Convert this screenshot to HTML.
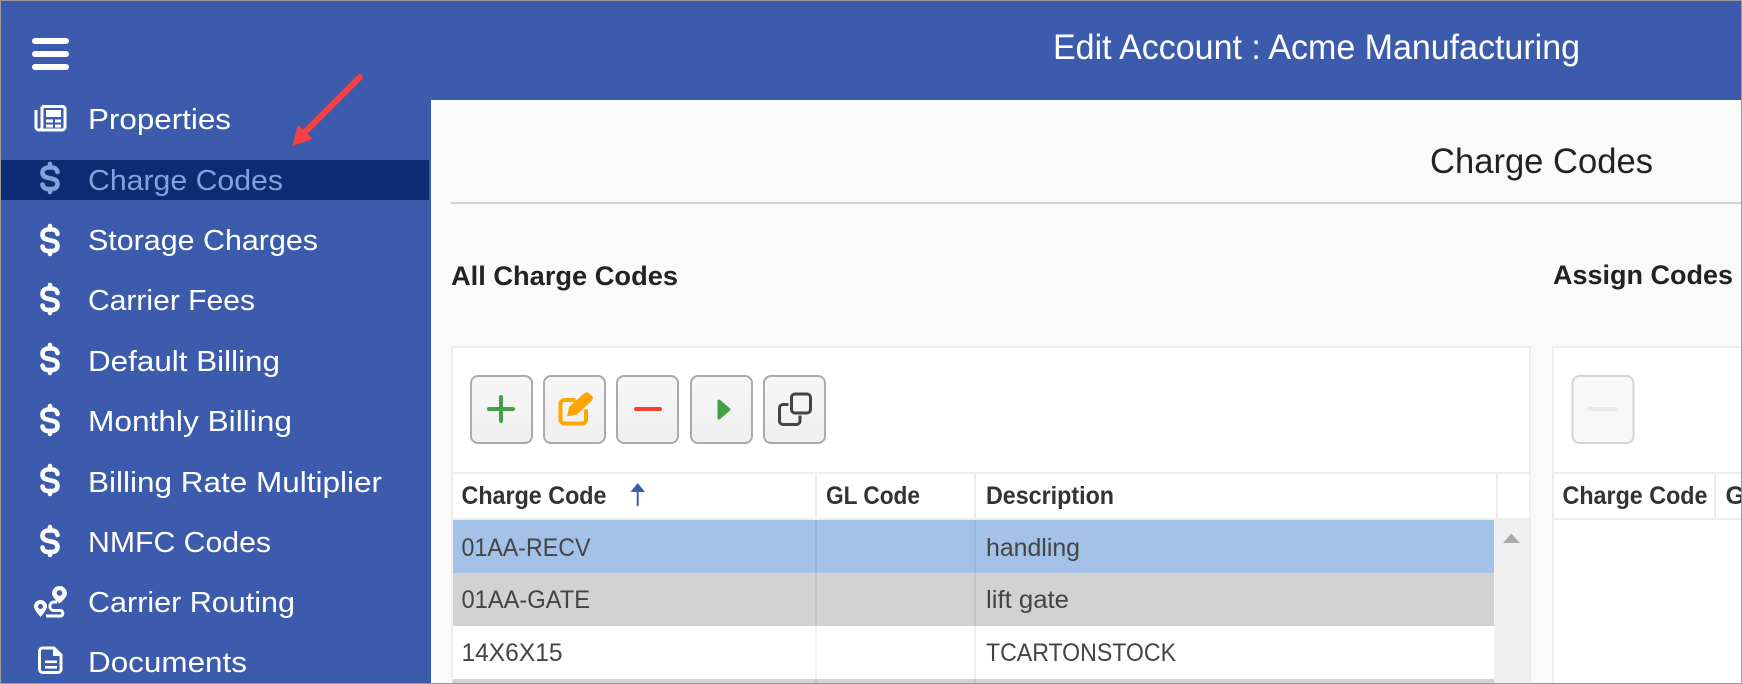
<!DOCTYPE html>
<html>
<head>
<meta charset="utf-8">
<title>Edit Account : Acme Manufacturing</title>
<style>
html,body{margin:0;padding:0;width:1742px;height:684px;overflow:hidden;background:#fafafa}
svg{display:block;position:absolute;left:0;top:0}
text{font-family:"Liberation Sans",Arial,sans-serif}
.nav{font-size:29px;fill:#fff}
.hd{font-size:25px;font-weight:bold;fill:#333}
.td{font-size:25px;fill:#444}
.btn{stroke:#aaa;stroke-width:2;fill:url(#g)}
</style>
</head>
<body>
<svg width="1742" height="684" viewBox="0 0 1742 684">
<defs>
<linearGradient id="g" x1="0" y1="0" x2="0" y2="1"><stop offset="0" stop-color="#f7f7f7"/><stop offset="1" stop-color="#efefef"/></linearGradient>
<g id="d" fill="none" stroke-linecap="round" stroke-linejoin="round">
<path stroke-width="4.600" d="M10 2V5M10 27V30"/>
<path stroke-width="4.600" d="M17.500 10C17 7 14.500 5.500 12 5.500H8.500C5 5.500 2.500 7.500 2.500 10.500C2.500 13.500 4.500 15 7 15.500L13 17C16 17.700 17.500 19.500 17.500 22C17.500 25 15.500 27 12 27H8C5 27 3 25.500 2.500 22.500"/>
</g>
</defs>

<!-- backgrounds -->
<rect x="0" y="0" width="1742" height="684" fill="#fafafa"/>
<rect x="0" y="0" width="1742" height="100" fill="#3c5bac"/>
<rect x="0" y="0" width="431" height="684" fill="#3c5bac"/>
<rect x="1" y="160" width="428" height="40" fill="#0d2b73"/>

<!-- header -->
<g fill="#fff"><rect x="32" y="38" width="37" height="6" rx="3"/><rect x="32" y="51" width="37" height="6" rx="3"/><rect x="32" y="64" width="37" height="6" rx="3"/></g>
<text x="1053" y="59" font-size="35" fill="#fff" textLength="527" lengthAdjust="spacingAndGlyphs">Edit Account : Acme Manufacturing</text>

<!-- red arrow -->
<path d="M360 77L304 133" stroke="#f44141" stroke-width="6" stroke-linecap="round" fill="none"/>
<path d="M292 146L298 125L313 139Z" fill="#f44141"/>

<!-- nav icons -->
<g fill="none" stroke="#fff" stroke-width="3" stroke-linejoin="round">
<path d="M42 106.500H62.500A2.500 2.500 0 0 1 65 109V127A3 3 0 0 1 62 130H38.500A3 3 0 0 1 36 127V110"/>
<path d="M42 106.500V127A3 3 0 0 1 39 130"/>
</g>
<g fill="#fff"><rect x="46" y="110" width="15" height="7"/><rect x="46" y="119.500" width="7" height="3"/><rect x="55" y="119.500" width="6" height="3"/><rect x="46" y="124.500" width="7" height="3"/><rect x="55" y="124.500" width="6" height="3"/></g>
<use href="#d" x="40" y="162" stroke="#7ea3dc"/>
<use href="#d" x="40" y="224" stroke="#fff"/>
<use href="#d" x="40" y="283" stroke="#fff"/>
<use href="#d" x="40" y="343" stroke="#fff"/>
<use href="#d" x="40" y="404" stroke="#fff"/>
<use href="#d" x="40" y="464" stroke="#fff"/>
<use href="#d" x="40" y="525" stroke="#fff"/>
<!-- route -->
<path d="M59.500 586a7.500 7.500 0 0 0-7.500 7.500c0 4 7.500 10 7.500 10s7.500-6 7.500-10a7.500 7.500 0 0 0-7.500-7.500z" fill="#fff"/>
<circle cx="59.500" cy="593" r="2.800" fill="#3c5bac"/>
<path d="M40.500 600a6.500 6.500 0 0 0-6.500 6.500c0 3.500 6.500 10.500 6.500 10.500s6.500-7 6.500-10.500a6.500 6.500 0 0 0-6.500-6.500z" fill="#fff"/>
<circle cx="40.500" cy="606.500" r="2.500" fill="#3c5bac"/>
<path d="M57 602H53.500A4.300 4.300 0 0 0 53.500 610.500H61A3 3 0 0 1 61 616H46" fill="none" stroke="#fff" stroke-width="3"/>
<!-- document -->
<path d="M42.500 648H54L61 655V669.500A3 3 0 0 1 58 672.500H42.500A3 3 0 0 1 39.500 669.500V651A3 3 0 0 1 42.500 648Z" fill="none" stroke="#fff" stroke-width="3" stroke-linejoin="round"/>
<path d="M54 648V655H61" fill="#fff" stroke="#fff" stroke-width="2"/>
<rect x="45" y="660.500" width="12" height="2.600" fill="#fff"/><rect x="45" y="666" width="12" height="2.600" fill="#fff"/>

<!-- nav text -->
<g class="nav">
<text class="nav" x="88" y="129" textLength="143" lengthAdjust="spacingAndGlyphs">Properties</text>
<text class="nav" x="88" y="190" textLength="195" lengthAdjust="spacingAndGlyphs" style="fill:#7ea3dc">Charge Codes</text>
<text class="nav" x="88" y="250" textLength="230" lengthAdjust="spacingAndGlyphs">Storage Charges</text>
<text class="nav" x="88" y="310" textLength="167" lengthAdjust="spacingAndGlyphs">Carrier Fees</text>
<text class="nav" x="88" y="371" textLength="192" lengthAdjust="spacingAndGlyphs">Default Billing</text>
<text class="nav" x="88" y="431" textLength="204" lengthAdjust="spacingAndGlyphs">Monthly Billing</text>
<text class="nav" x="88" y="492" textLength="294" lengthAdjust="spacingAndGlyphs">Billing Rate Multiplier</text>
<text class="nav" x="88" y="552" textLength="183" lengthAdjust="spacingAndGlyphs">NMFC Codes</text>
<text class="nav" x="88" y="612" textLength="207" lengthAdjust="spacingAndGlyphs">Carrier Routing</text>
<text class="nav" x="88" y="672" textLength="159" lengthAdjust="spacingAndGlyphs">Documents</text>
</g>

<!-- page title -->
<text x="1430" y="173" font-size="35" fill="#222" textLength="223" lengthAdjust="spacingAndGlyphs">Charge Codes</text>
<rect x="451" y="202" width="1290" height="2" fill="#d2d2d2"/>
<text x="451" y="285" font-size="27" font-weight="bold" fill="#222" textLength="227" lengthAdjust="spacingAndGlyphs">All Charge Codes</text>
<text x="1553" y="284" font-size="27" font-weight="bold" fill="#222" textLength="180" lengthAdjust="spacingAndGlyphs">Assign Codes</text>

<!-- left panel -->
<rect x="452" y="347" width="1078" height="338" fill="#fff" stroke="#eee" stroke-width="2"/>
<rect x="453" y="472" width="1076" height="2" fill="#eee"/>
<rect x="453" y="518" width="1076" height="2" fill="#eee"/>
<rect x="453" y="520" width="1041" height="53" fill="#a4c2e8"/>
<rect x="453" y="573" width="1041" height="53" fill="#d2d2d2"/>
<rect x="453" y="679" width="1041" height="5" fill="#d2d2d2"/>
<rect x="1494" y="520" width="35" height="164" fill="#f0f0f0"/>
<path d="M1511.300 533.500L1520 543H1503Z" fill="#a9a9a9"/>
<rect x="815" y="474" width="2" height="44" fill="#eee"/>
<rect x="974" y="474" width="2" height="44" fill="#eee"/>
<rect x="1496" y="474" width="2" height="44" fill="#eee"/>
<rect x="815" y="520" width="2" height="164" fill="#000" fill-opacity=".06"/>
<rect x="974" y="520" width="2" height="164" fill="#000" fill-opacity=".06"/>

<!-- buttons -->
<rect class="btn" x="471" y="376" width="61" height="67" rx="7"/>
<rect class="btn" x="544" y="376" width="61" height="67" rx="7"/>
<rect class="btn" x="617" y="376" width="61" height="67" rx="7"/>
<rect class="btn" x="691" y="376" width="61" height="67" rx="7"/>
<rect class="btn" x="764" y="376" width="61" height="67" rx="7"/>
<path d="M489 409H513M501 397V421" stroke="#43a047" stroke-width="4" stroke-linecap="round" fill="none"/>
<path d="M574 400H564.500A4 4 0 0 0 560.500 404V419.500A4 4 0 0 0 564.500 423.500H582A4 4 0 0 0 586 419.500V411" fill="none" stroke="#ffa500" stroke-width="4" stroke-linecap="round"/>
<path d="M567 416.500L569 407L584 393.500Q587 391 589.500 393.500L592 396Q594 398.500 591.500 401L577 414.500Z" fill="#ffa500"/>
<path d="M636 409H660" stroke="#f44336" stroke-width="4" stroke-linecap="round"/>
<path d="M719 401L729 409.500L719 418Z" fill="#43a047" stroke="#43a047" stroke-width="3" stroke-linejoin="round"/>
<rect x="791.500" y="394" width="19" height="19" rx="3.500" fill="none" stroke="#444" stroke-width="3"/>
<path d="M788.500 404.500H783A3.500 3.500 0 0 0 779.500 408V421A3.500 3.500 0 0 0 783 424.500H796.500A3.500 3.500 0 0 0 800 421V415.500" fill="none" stroke="#444" stroke-width="3"/>

<!-- left table text -->
<text class="hd" x="461.500" y="504" textLength="145" lengthAdjust="spacingAndGlyphs">Charge Code</text>
<path d="M637.700 491V506" stroke="#3c5bac" stroke-width="2"/>
<path d="M637.700 483L645 492H630.500Z" fill="#3c5bac"/>
<text class="hd" x="826" y="504" textLength="94" lengthAdjust="spacingAndGlyphs">GL Code</text>
<text class="hd" x="986" y="504" textLength="128" lengthAdjust="spacingAndGlyphs">Description</text>
<text class="td" x="461.500" y="556" textLength="129" lengthAdjust="spacingAndGlyphs">01AA-RECV</text>
<text class="td" x="461.500" y="608" textLength="128.500" lengthAdjust="spacingAndGlyphs">01AA-GATE</text>
<text class="td" x="461.500" y="661" textLength="101" lengthAdjust="spacingAndGlyphs">14X6X15</text>
<text class="td" x="986" y="556" textLength="94" lengthAdjust="spacingAndGlyphs">handling</text>
<text class="td" x="986" y="608" textLength="83" lengthAdjust="spacingAndGlyphs">lift gate</text>
<text class="td" x="986" y="661" textLength="190" lengthAdjust="spacingAndGlyphs">TCARTONSTOCK</text>

<!-- right panel -->
<rect x="1553" y="347" width="200" height="338" fill="#fff" stroke="#eee" stroke-width="2"/>
<rect x="1554" y="472" width="188" height="2" fill="#eee"/>
<rect x="1554" y="518" width="188" height="2" fill="#eee"/>
<rect x="1714" y="474" width="2" height="44" fill="#eee"/>
<rect x="1572.500" y="376" width="61" height="67" rx="7" fill="#f8f8f8" stroke="#d4d4d4" stroke-width="2"/>
<path d="M1590 409H1615" stroke="#e8e8e8" stroke-width="4" stroke-linecap="round"/>
<text class="hd" x="1562.500" y="504" textLength="145" lengthAdjust="spacingAndGlyphs">Charge Code</text>
<text class="hd" x="1725.500" y="504">G</text>

<!-- outer window border -->
<rect x="0.500" y="0.500" width="1741" height="683" fill="none" stroke="#999" stroke-width="1"/>
</svg>
</body>
</html>
